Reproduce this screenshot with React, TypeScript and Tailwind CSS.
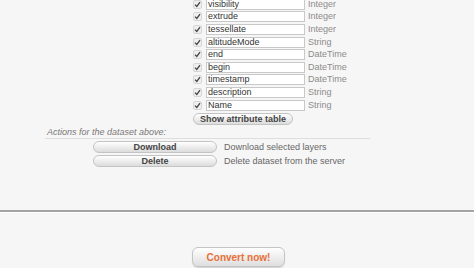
const attributes = [
  { name: "visibility", type: "Integer" },
  { name: "extrude", type: "Integer" },
  { name: "tessellate", type: "Integer" },
  { name: "altitudeMode", type: "String" },
  { name: "end", type: "DateTime" },
  { name: "begin", type: "DateTime" },
  { name: "timestamp", type: "DateTime" },
  { name: "description", type: "String" },
  { name: "Name", type: "String" },
]

function Check() {
  return (
    <span className="flex items-center justify-center w-[9px] h-[9px] rounded-[2px] bg-[#efefef] border border-[#d6d6d6]">
      <svg width="7" height="7" viewBox="0 0 7 7">
        <path d="M1 3.6 L2.8 5.4 L6 1.2" fill="none" stroke="#444" strokeWidth="1.3" />
      </svg>
    </span>
  )
}

function PillButton({ label, className }: { label: string; className: string }) {
  return (
    <button
      className={
        "flex items-center justify-center rounded-full border border-[#c4c4c4] bg-gradient-to-b from-white to-[#dcdcdc] text-[9px] font-bold text-[#444] leading-none " +
        className
      }
    >
      {label}
    </button>
  )
}

export default function App() {
  return (
    <div className="w-[474px] h-[268px] overflow-hidden bg-[#f7f6f6] font-['Liberation_Sans',Arial,sans-serif]">
      <div className="flex flex-col mt-[-2px]">
        {attributes.map((a) => (
          <div key={a.name} className="flex items-center h-[12.6px] pl-[193px]">
            <Check />
            <span className="ml-[4px] flex items-center w-[99px] h-[11px] border border-[#c8c8c8] bg-white px-[1px] text-[9px] text-[#333] leading-none">
              {a.name}
            </span>
            <span className="ml-[3px] text-[9px] text-[#8c8c8c] leading-none">{a.type}</span>
          </div>
        ))}
      </div>

      <PillButton label="Show attribute table" className="ml-[193px] mt-[2px] w-[100px] h-[12px]" />

      <p className="ml-[47px] mt-[1px] text-[9px] italic text-[#777] leading-[12px]">
        Actions for the dataset above:
      </p>
      <div className="ml-[45px] w-[325px] border-b border-[#dedede]"></div>

      <div className="flex flex-col gap-[2px] mt-[2px]">
        <div className="flex items-center pl-[93px]">
          <PillButton label="Download" className="w-[124px] h-[12px]" />
          <span className="ml-[7px] text-[9px] text-[#666] leading-none">Download selected layers</span>
        </div>
        <div className="flex items-center pl-[93px]">
          <PillButton label="Delete" className="w-[124px] h-[12px]" />
          <span className="ml-[7px] text-[9px] text-[#666] leading-none">Delete dataset from the server</span>
        </div>
      </div>

      <div className="mt-[43px] h-[2px] bg-[#a3a3a3] border-b border-white box-content"></div>

      <div className="flex justify-center mt-[34px]">
        <button className="ml-[3px] w-[93px] h-[20px] rounded-[6px] border border-[#c4c4c4] bg-gradient-to-b from-white to-[#dedede] text-[10px] font-bold text-[#e8703a] shadow-[0_1px_1px_rgba(0,0,0,0.15)]">
          Convert now!
        </button>
      </div>
    </div>
  )
}
